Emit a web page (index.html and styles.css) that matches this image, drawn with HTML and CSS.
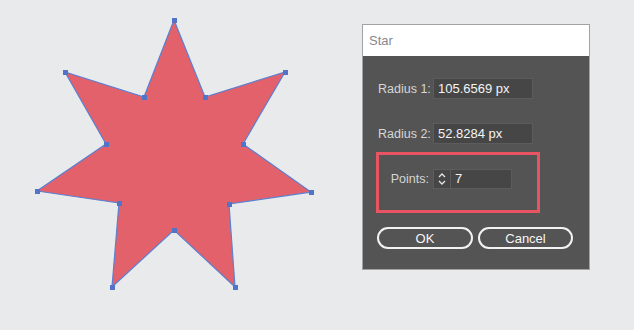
FILE: index.html
```html
<!DOCTYPE html>
<html lang="en">
<head>
<meta charset="UTF-8">
<title>Star</title>
<link rel="stylesheet" href="styles.css">
</head>
<body>
<div class="stage">
  <svg class="canvas" width="362" height="330" viewBox="0 0 362 330">
    <polygon class="star" points="174,20 205,97 285,72 243,144 311,192 229,204 235,287 174,230 112,287 119,203 37,191 106,144 65,72 144,97"/>
    <g class="anchors">
      <rect x="172" y="18" width="5" height="5"/>
      <rect x="203" y="95" width="5" height="5"/>
      <rect x="283" y="70" width="5" height="5"/>
      <rect x="241" y="142" width="5" height="5"/>
      <rect x="309" y="190" width="5" height="5"/>
      <rect x="227" y="202" width="5" height="5"/>
      <rect x="233" y="285" width="5" height="5"/>
      <rect x="172" y="228" width="5" height="5"/>
      <rect x="110" y="285" width="5" height="5"/>
      <rect x="117" y="201" width="5" height="5"/>
      <rect x="35" y="189" width="5" height="5"/>
      <rect x="104" y="142" width="5" height="5"/>
      <rect x="63" y="70" width="5" height="5"/>
      <rect x="142" y="95" width="5" height="5"/>
    </g>
  </svg>

  <div class="dialog">
    <div class="dialog-title">Star</div>
    <div class="dialog-body">
      <div class="field">
        <span class="label">Radius 1:</span>
        <span class="input">105.6569 px</span>
      </div>
      <div class="field">
        <span class="label">Radius 2:</span>
        <span class="input">52.8284 px</span>
      </div>
      <div class="highlight">
        <div class="field">
          <span class="label">Points:</span>
          <span class="spinner">
            <svg width="10" height="16" viewBox="0 0 10 16">
              <polyline points="2,6 5,3 8,6"/>
              <polyline points="2,10 5,13 8,10"/>
            </svg>
          </span>
          <span class="input short">7</span>
        </div>
      </div>
      <div class="buttons">
        <button class="btn ok">OK</button>
        <button class="btn cancel">Cancel</button>
      </div>
    </div>
  </div>
</div>
</body>
</html>
```

FILE: styles.css
```css
body {
  margin: 0;
  background-color: #e9eaec;
  font-family: "Liberation Sans", Arial, sans-serif;
}

.stage {
  display: flex;
  align-items: flex-start;
  width: 634px;
  height: 330px;
}

.canvas {
  display: block;
  flex: none;
}

.star {
  fill: #e3616b;
  stroke: #5b7fd1;
  stroke-width: 1.2;
  stroke-linejoin: miter;
}

.anchors rect {
  fill: #4f74c8;
}

.dialog {
  margin-top: 24px;
  width: 226px;
  border: 1px solid #a3a3a3;
  background-color: #535453;
}

.dialog-title {
  height: 31px;
  line-height: 31px;
  padding-left: 6px;
  background-color: #fff;
  color: #8a8791;
  font-size: 13px;
}

.dialog-body {
  height: 213px;
  padding: 22px 0 0 15px;
  box-sizing: border-box;
}

.field {
  display: flex;
  align-items: center;
  height: 21px;
  margin-bottom: 24px;
}

.label {
  width: 50px;
  margin-right: 5px;
  text-align: right;
  white-space: nowrap;
  color: #d6d6d6;
  font-size: 12.5px;
}

.input {
  width: 100px;
  height: 21px;
  box-sizing: border-box;
  padding-left: 4px;
  line-height: 19px;
  background-color: #464646;
  border: 1px solid #5c5c5c;
  color: #f4f4f4;
  font-size: 13px;
}

.highlight {
  margin: -16px 0 0 -2px;
  width: 158px;
  height: 41px;
  padding: 14px 0 0 0;
  border: 3px solid #e85462;
}

.highlight .field {
  height: 20px;
  margin: 0;
}

.highlight .label {
  width: 50px;
  margin-right: 4px;
}

.spinner {
  width: 18px;
  height: 20px;
  box-sizing: border-box;
  display: flex;
  align-items: center;
  justify-content: center;
  background-color: #464646;
  border: 1px solid #5c5c5c;
}

.spinner polyline {
  fill: none;
  stroke: #e6e6e6;
  stroke-width: 1.3;
}

.input.short {
  width: 61px;
  height: 20px;
  line-height: 18px;
  border-left: none;
}

.buttons {
  display: flex;
  gap: 5px;
  margin-top: 14px;
  margin-left: -1px;
}

.btn {
  height: 22px;
  box-sizing: border-box;
  border: 2px solid #f2f2f2;
  border-radius: 11px;
  background-color: transparent;
  color: #f6f6f6;
  font-family: "Liberation Sans", Arial, sans-serif;
  font-size: 13px;
  padding: 0;
}

.ok {
  width: 96px;
}

.cancel {
  width: 95px;
}
```
